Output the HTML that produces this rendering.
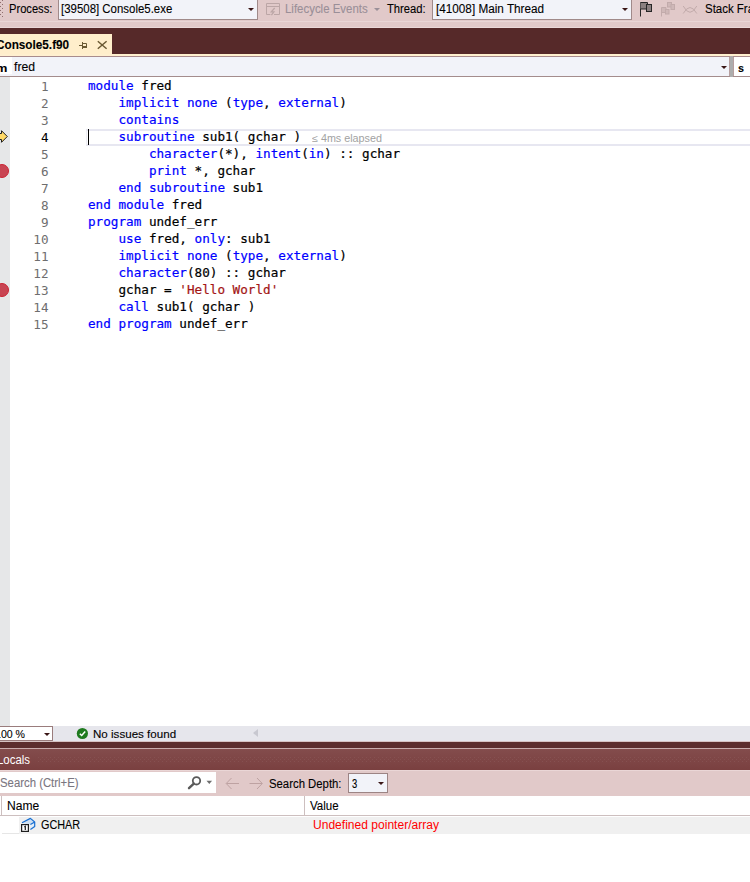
<!DOCTYPE html>
<html><head><meta charset="utf-8"><title>Console5.f90</title>
<style>
html,body{margin:0;padding:0;}
body{width:750px;height:882px;overflow:hidden;background:#fff;position:relative;font-family:"Liberation Sans",sans-serif;font-size:12px;color:#000;}
.abs{position:absolute;}
.t{position:absolute;white-space:pre;line-height:16px;height:16px;transform-origin:0 0;-webkit-text-stroke:0.1px currentColor;}
.arr{position:absolute;width:0;height:0;border-left:3px solid transparent;border-right:3px solid transparent;border-top:3.5px solid #3a1616;}
.combo{position:absolute;background:#f2f3f9;border:1px solid #a08a8a;box-sizing:border-box;}
.code{font-family:"DejaVu Sans Mono","Liberation Mono",monospace;font-size:12.65px;}
.ln{position:absolute;left:0;width:48.5px;text-align:right;color:#6e6e6e;white-space:pre;height:17px;line-height:17px;margin-top:1px;}
.cl{position:absolute;left:88px;white-space:pre;height:17px;line-height:17px;color:#000;-webkit-text-stroke:0.2px currentColor;}
.k{color:#0000ff;}
.s{color:#a31515;}
.bp{position:absolute;left:-5px;width:14px;height:14px;border-radius:50%;background:#c84452;border:1px solid #cb2232;box-sizing:border-box;}
</style></head><body>

<!-- ===== debug toolbar ===== -->
<div class="abs" style="left:0;top:0;width:750px;height:28px;background:#e1c9c9;"></div>
<div class="abs" style="left:0;top:21px;width:750px;height:1px;background:#e9d6d6;"></div>
<div class="abs" style="left:0;top:27px;width:750px;height:1px;background:#ead8d8;"></div>
<svg class="abs" style="left:0;top:0" width="4" height="18" viewBox="0 0 4 18"><g fill="#8f6f6f"><rect x="2" y="0" width="1" height="1"/><rect x="2" y="4" width="1" height="1"/><rect x="2" y="8" width="1" height="1"/><rect x="2" y="12" width="1" height="1"/><rect x="2" y="16" width="1" height="1"/><rect x="0" y="2" width="1" height="1"/><rect x="0" y="6" width="1" height="1"/><rect x="0" y="10" width="1" height="1"/><rect x="0" y="14" width="1" height="1"/></g></svg>
<div class="combo" style="left:58px;top:-1px;width:200px;height:21px;"></div>
<div class="arr" style="left:248px;top:8px;"></div>
<svg class="abs" style="left:265px;top:2px" width="16" height="15" viewBox="0 0 16 15"><path d="M5.400 12.500 H1.500 V1.500 H14.500 V12.500 H9 M1.500 4.500 H14.500" fill="none" stroke="#bca6a6"/><path d="M9.700 6 L6.300 9.800 H8.900 L6.400 13.200" fill="none" stroke="#bca6a6" stroke-width="1.300"/></svg>
<div class="arr" style="left:374px;top:8px;border-top-color:#9a8f98;"></div>
<div class="combo" style="left:432px;top:-1px;width:200px;height:21px;"></div>
<div class="arr" style="left:622px;top:8px;"></div>
<svg class="abs" style="left:638px;top:0px" width="64" height="18" viewBox="0 0 64 18">
  <path d="M2.500 2.500 V16.500" stroke="#262626" stroke-width="1" fill="none"/>
  <path d="M2.500 2.500 H9.500 V9 H2.500" fill="#8a7f7f" stroke="#262626" stroke-width="1"/>
  <rect x="8.500" y="4.500" width="5" height="7" fill="#8a7f7f" stroke="#262626" stroke-width="1"/>
  <g stroke="#c2abab" fill="#cfb8b8" stroke-width="1"><path d="M23.500 16.500 V7.500 H28 V12.500 H23.500"/><rect x="27.500" y="9.500" width="3.500" height="4.500"/><rect x="29.500" y="2.500" width="4" height="4.500"/><rect x="33" y="4.500" width="3.500" height="5"/></g>
  <path d="M45.200 13.500 Q52 1.500 58.800 13.500 M45.200 6 Q52 18.600 58.800 6" stroke="#c2abab" fill="none"/>
</svg>
<span class="t" style="left:8.67px;top:1px;transform:scaleX(0.9289);">Process:</span><span class="t" style="left:61.45px;top:1px;transform:scaleX(0.9534);">[39508] Console5.exe</span><span class="t" style="left:285.05px;top:1px;transform:scaleX(0.9535);color:#9a8f98">Lifecycle Events</span><span class="t" style="left:387.00px;top:1px;transform:scaleX(0.9366);">Thread:</span><span class="t" style="left:436.02px;top:1px;transform:scaleX(0.9780);">[41008] Main Thread</span><span class="t" style="left:704.84px;top:1px;transform:scaleX(0.9550);">Stack Frame:</span>

<!-- ===== document tab strip ===== -->
<div class="abs" style="left:0;top:28px;width:750px;height:26px;background:#562929;"></div>
<div class="abs" style="left:0;top:34px;width:112px;height:20px;background:#ffeecb;"></div>
<div class="abs" style="left:0;top:54px;width:750px;height:2px;background:#ffefcf;"></div>
<div class="abs" style="left:0;top:56px;width:750px;height:1px;background:#a88c8c;"></div>
<svg class="abs" style="left:78px;top:38px" width="32" height="14" viewBox="0 0 32 14"><path d="M1 7.500 H4.500 M4.500 4 V11 M4.500 5.500 H8.500 V8 M4.500 9 H9" stroke="#6b5a33" fill="none"/><path d="M4.500 9 H9" stroke="#6b5a33" stroke-width="2" fill="none"/><path d="M19.800 3.300 L28.600 10.700 M28.600 3.300 L19.800 10.700" stroke="#6b5a33" stroke-width="1.500" fill="none"/></svg>
<span class="t" style="left:-4.50px;top:37px;transform:scaleX(0.9397);font-weight:bold;font-size:12.5px">Console5.f90</span>

<!-- ===== navigation bar ===== -->
<div class="abs" style="left:0;top:57px;width:750px;height:19px;background:#f2f3f9;"></div>
<div class="abs" style="left:0;top:57px;width:12px;height:17px;background:#fff;"></div>
<div class="abs" style="left:729px;top:57px;width:1px;height:19px;background:#b79f9f;"></div>
<div class="abs" style="left:730px;top:56px;width:3px;height:21px;background:#adadad;"></div>
<div class="abs" style="left:733px;top:57px;width:17px;height:19px;background:#fff;border-left:1px solid #b79f9f;box-sizing:border-box;"></div>
<div class="abs" style="left:0;top:76px;width:750px;height:1px;background:#a48c8c;"></div>
<div class="abs" style="left:730px;top:76px;width:3px;height:1px;background:#adadad;"></div>
<div class="arr" style="left:721px;top:66px;"></div>
<span class="t" style="left:-3.91px;top:60px;transform:scaleX(1.1111);font-weight:bold;font-size:11.5px">m</span><span class="t" style="left:14.00px;top:59px;transform:scaleX(1.0200);">fred</span><span class="t" style="left:738.00px;top:60px;transform:scaleX(0.9333);font-weight:bold;font-size:11.5px">s</span>

<!-- ===== editor ===== -->
<div class="abs" style="left:0;top:77px;width:10px;height:649px;background:#e6e7e8;"></div>
<div id="editor" class="abs code" style="left:0;top:77px;width:750px;height:649px;">
  <div class="abs" style="left:86px;top:52px;width:664px;height:17px;border-top:2px solid #e7e7f1;border-bottom:2px solid #e7e7f1;border-left:1px solid #eeeef5;box-sizing:border-box;"></div>
  <div class="abs" style="left:88px;top:52px;width:1px;height:16px;background:#000;"></div>
  <div class="ln" style="top:0px">1</div><div class="cl" style="top:0px"><span class="k">module</span> fred</div>
  <div class="ln" style="top:17px">2</div><div class="cl" style="top:17px">    <span class="k">implicit none</span> (<span class="k">type</span>, <span class="k">external</span>)</div>
  <div class="ln" style="top:34px">3</div><div class="cl" style="top:34px">    <span class="k">contains</span></div>
  <div class="ln" style="top:51px;color:#000">4</div><div class="cl" style="top:51px">    <span class="k">subroutine</span> sub1( gchar )</div>
  <div class="ln" style="top:68px">5</div><div class="cl" style="top:68px">        <span class="k">character</span>(*), <span class="k">intent</span>(<span class="k">in</span>) :: gchar</div>
  <div class="ln" style="top:85px">6</div><div class="cl" style="top:85px">        <span class="k">print</span> *, gchar</div>
  <div class="ln" style="top:102px">7</div><div class="cl" style="top:102px">    <span class="k">end subroutine</span> sub1</div>
  <div class="ln" style="top:119px">8</div><div class="cl" style="top:119px"><span class="k">end module</span> fred</div>
  <div class="ln" style="top:136px">9</div><div class="cl" style="top:136px"><span class="k">program</span> undef_err</div>
  <div class="ln" style="top:153px">10</div><div class="cl" style="top:153px">    <span class="k">use</span> fred, <span class="k">only</span>: sub1</div>
  <div class="ln" style="top:170px">11</div><div class="cl" style="top:170px">    <span class="k">implicit none</span> (<span class="k">type</span>, <span class="k">external</span>)</div>
  <div class="ln" style="top:187px">12</div><div class="cl" style="top:187px">    <span class="k">character</span>(80) :: gchar</div>
  <div class="ln" style="top:204px">13</div><div class="cl" style="top:204px">    gchar = <span class="s">'Hello World'</span></div>
  <div class="ln" style="top:221px">14</div><div class="cl" style="top:221px">    <span class="k">call</span> sub1( gchar )</div>
  <div class="ln" style="top:238px">15</div><div class="cl" style="top:238px"><span class="k">end program</span> undef_err</div>
  <svg class="abs" style="left:0px;top:52px" width="10" height="16" viewBox="0 0 10 16"><path d="M-2 4.500 H1.500 V1.700 L7.300 7.500 L1.500 13.300 V10.500 H-2 Z" fill="#ffd966" stroke="#1e1e1e" stroke-width="1"/></svg>
  <div class="bp" style="top:87px"></div>
  <div class="bp" style="top:206px"></div>
</div>
<span class="t" style="left:312.00px;top:131px;transform:scaleX(1.0769);font-size:10px;color:#a2a2a2;-webkit-text-stroke:0">≤ 4ms elapsed</span>

<!-- ===== editor status strip ===== -->
<div class="abs" style="left:0;top:726px;width:750px;height:15px;background:#e6e6ec;"></div>
<div class="abs" style="left:0;top:741px;width:750px;height:1px;background:#d6c2c2;"></div>
<div class="abs" style="left:-1px;top:726px;width:54px;height:15px;background:#fff;border:1px solid #9a7c7c;box-sizing:border-box;"></div>
<div class="arr" style="left:44px;top:733px;"></div>
<svg class="abs" style="left:76px;top:727px" width="13" height="13" viewBox="0 0 13 13"><circle cx="6.400" cy="6.500" r="5.600" fill="#1f7a1f"/><path d="M3.800 6.700 L5.700 8.500 L9.200 4.600" stroke="#fff" stroke-width="1.500" fill="none"/></svg>
<div class="abs" style="left:253px;top:729px;width:0;height:0;border-top:4.5px solid transparent;border-bottom:4.5px solid transparent;border-right:5px solid #c8c8d0;"></div>
<span class="t" style="left:-4.90px;top:726px;transform:scaleX(0.9630);font-size:11px">100 %</span><span class="t" style="left:93.25px;top:726px;transform:scaleX(1.0538);font-size:11px">No issues found</span>

<!-- ===== Locals tool window ===== -->
<div class="abs" style="left:0;top:742px;width:750px;height:6px;background:#5c2d2d;"></div>
<div class="abs" style="left:0;top:748px;width:750px;height:1px;background:#c9abab;"></div>
<div class="abs" style="left:0;top:749px;width:750px;height:21px;background:linear-gradient(#834c4c,#7a4040);"></div>
<svg class="abs" style="left:38px;top:757px" width="712" height="6" viewBox="0 0 712 6"><defs><pattern id="grip" x="0" y="0" width="4" height="4" patternUnits="userSpaceOnUse"><rect x="0" y="0" width="1" height="1" fill="#865151"/><rect x="2" y="2" width="1" height="1" fill="#865151"/></pattern></defs><rect x="0" y="0" width="712" height="5" fill="url(#grip)"/></svg>
<span class="t" style="left:-3.15px;top:752px;transform:scaleX(0.9529);color:#fff;-webkit-text-stroke:0">Locals</span>
<div class="abs" style="left:0;top:770px;width:750px;height:26px;background:#e1c9c9;"></div>
<div class="abs" style="left:0;top:770px;width:750px;height:1px;background:#ead6d6;"></div>
<div class="abs" style="left:0;top:772px;width:216px;height:21px;background:#fff;"></div>
<svg class="abs" style="left:186px;top:774px" width="30" height="17" viewBox="0 0 30 17"><circle cx="10.500" cy="6.800" r="3.700" fill="none" stroke="#5a5a5a" stroke-width="1.800"/><path d="M7.800 9.600 L3 14.200" stroke="#5a5a5a" stroke-width="2.400" stroke-linecap="round"/><path d="M20.500 6.800 h5.600 l-2.800 3.200 z" fill="#6e6e6e"/></svg>
<svg class="abs" style="left:224px;top:776px" width="42" height="14" viewBox="0 0 42 14"><path d="M15 7.500 H2.500 M7.500 2 L2.200 7.500 L7.500 13 M25.500 7.500 H38 M33 2 L38.300 7.500 L33 13" stroke="#bea2a2" stroke-width="1" fill="none"/></svg>
<div class="combo" style="left:348px;top:773px;width:40px;height:20px;border-color:#9c8484;"></div>
<div class="arr" style="left:378px;top:782px;"></div>
<span class="t" style="left:-0.15px;top:775px;transform:scaleX(0.9463);color:#7a7680">Search (Ctrl+E)</span><span class="t" style="left:269.35px;top:776px;transform:scaleX(0.9453);">Search Depth:</span><span class="t" style="left:352.00px;top:776px;transform:scaleX(0.7857);">3</span>
<div class="abs" style="left:0;top:796px;width:750px;height:19px;background:#fff;"></div>
<div class="abs" style="left:0;top:815px;width:750px;height:1px;background:#cdbfbf;"></div>
<div class="abs" style="left:1px;top:796px;width:1px;height:19px;background:#cdbfbf;"></div>
<div class="abs" style="left:304px;top:796px;width:1px;height:19px;background:#cdbfbf;"></div>
<span class="t" style="left:6.69px;top:798px;transform:scaleX(1.0065);">Name</span><span class="t" style="left:310.40px;top:798px;transform:scaleX(0.9600);">Value</span>
<div class="abs" style="left:19px;top:817px;width:731px;height:17px;background:#f0f0f0;"></div>
<div class="abs" style="left:2px;top:833px;width:17px;height:1px;background:#e6e6e6;"></div>
<svg class="abs" style="left:20px;top:817px" width="16" height="16" viewBox="0 0 16 16"><path d="M2 5.700 L10.400 1.400 L14.700 5 L10.400 7.600 Z" fill="#cfe0f2" stroke="none"/><path d="M10.400 7.600 L14.700 5 V9.400 L10.400 12.500 Z" fill="#e4eef8" stroke="none"/><path d="M2 5.700 L10.400 1.400 L14.700 5 V9.400 L10.400 12.500 M10.400 7.600 L14.700 5" fill="none" stroke="#1a70d2" stroke-width="1.200" stroke-linejoin="round"/><rect x="1.600" y="7.600" width="6.800" height="6.800" fill="#fff" stroke="#1e1e1e" stroke-width="1.200"/><path d="M4.300 9.900 L5.300 9.300 V13" stroke="#1e1e1e" stroke-width="1.200" fill="none"/></svg>
<span class="t" style="left:40.80px;top:817px;transform:scaleX(0.9047);">GCHAR</span><span class="t" style="left:312.70px;top:817px;transform:scaleX(1.0048);color:#ff0000;-webkit-text-stroke:0">Undefined pointer/array</span>
</body></html>
